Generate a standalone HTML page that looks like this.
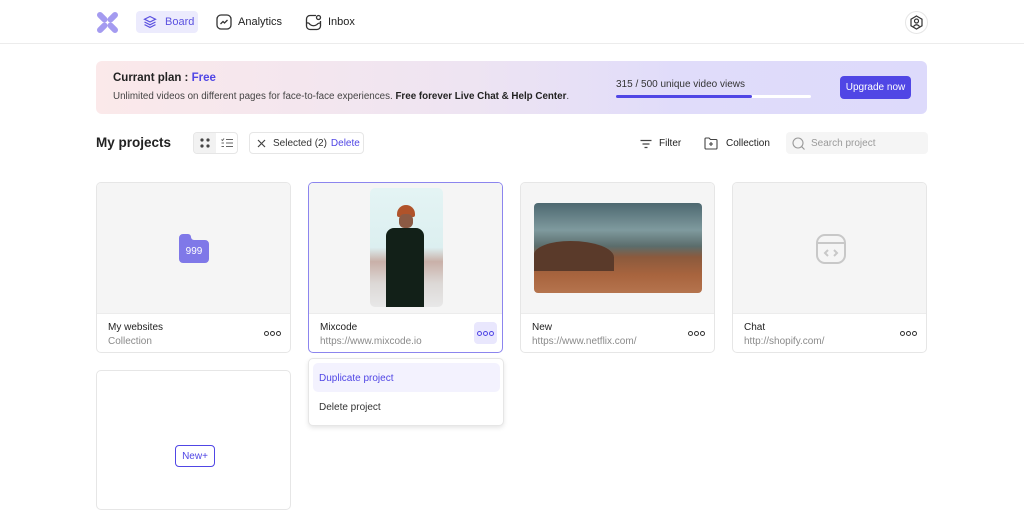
<!DOCTYPE html>
<html><head><meta charset="utf-8"><style>
*{box-sizing:border-box;margin:0;padding:0}
body{width:1024px;height:501px;overflow:hidden;background:#fff;font-family:"Liberation Sans",sans-serif;color:#222;position:relative}
.abs{position:absolute}
.nav{position:absolute;left:0;top:0;width:1024px;height:44px;border-bottom:1px solid #ececec}
.ni{position:absolute;top:11px;height:22px;display:flex;align-items:center;font-size:11px;color:#222}
.card{position:absolute;width:195px;height:171px;border:1px solid #e6e6e6;border-radius:5px;overflow:hidden;background:#fff}
.card .img{height:131px;background:#f5f5f5;border-bottom:1px solid #ececec;position:relative}
.card .t{position:absolute;left:11px;top:139px;font-size:10px;color:#222}
.card .s{position:absolute;left:11px;top:153px;font-size:10px;color:#8a8a8a}
.dots{position:absolute;right:9px;top:145px;width:18px;height:10px;display:flex;gap:1px;justify-content:center;align-items:center}
.dots i{width:5px;height:5px;border:1.4px solid #333;border-radius:50%}
</style></head><body>
<div class="nav">
 <svg class="abs" style="left:96px;top:11px" width="23" height="23" viewBox="0 0 23 23"><g stroke="#a49bf0" stroke-width="6" stroke-linecap="round"><path d="M4 4 L8.5 8.5"/><path d="M19 4 L14.5 8.5"/><path d="M4 19 L8.5 14.5"/><path d="M19 19 L14.5 14.5"/></g></svg>
 <div class="ni" style="left:136px;width:62px;background:#ecebfd;border-radius:4px;color:#5b51e0;padding-left:7px">
  <svg width="14" height="14" viewBox="0 0 14 14" fill="none" stroke="#5b51e0" stroke-width="1.2"><path d="M7 1.5 L12.5 4.2 L7 7 L1.5 4.2Z"/><path d="M1.5 7 L7 9.8 L12.5 7"/><path d="M1.5 9.6 L7 12.4 L12.5 9.6"/></svg><span style="margin-left:8px">Board</span></div>
 <div class="ni" style="left:216px">
  <svg width="16" height="16" viewBox="0 0 16 16" fill="none" stroke="#333" stroke-width="1.3"><rect x="1" y="1" width="14" height="14" rx="4"/><path d="M4.5 10 L7 7.5 L8.5 9 L11.5 6"/></svg><span style="margin-left:6px">Analytics</span></div>
 <div class="ni" style="left:305px">
  <svg width="17" height="17" viewBox="0 0 17 17" fill="none" stroke="#333" stroke-width="1.3"><path d="M11 1.5 H5 A3.5 3.5 0 0 0 1.5 5 V12 A3.5 3.5 0 0 0 5 15.5 H12 A3.5 3.5 0 0 0 15.5 12 V7"/><path d="M1.5 9 Q4 8.5 5 10.5 Q8.5 13 12 10.5 Q13 9 15.5 9"/><circle cx="13.5" cy="3.5" r="2"/></svg><span style="margin-left:6px">Inbox</span></div>
 <div class="abs" style="left:905px;top:11px;width:23px;height:23px;border:1px solid #e6e6e6;border-radius:50%;display:flex;align-items:center;justify-content:center">
  <svg width="15" height="15" viewBox="0 0 15 15" fill="none" stroke="#333" stroke-width="1.2"><path d="M7.5 1 L13 4.2 V10.8 L7.5 14 L2 10.8 V4.2Z"/><circle cx="7.5" cy="6" r="2"/><path d="M4.5 11.5 Q7.5 8 10.5 11.5"/></svg></div>
</div>

<div class="abs" style="left:96px;top:61px;width:831px;height:53px;border-radius:6px;background:linear-gradient(90deg,#fbe9ea 0%,#eee4f2 45%,#e0dcfa 70%,#dddafb 100%)">
 <div class="abs" style="left:17px;top:11px;font-size:11.5px;font-weight:bold;color:#222">Currant plan : <span style="color:#5046e5">Free</span></div>
 <div class="abs" style="left:17px;top:30px;font-size:9.8px;color:#444;white-space:nowrap">Unlimited videos on different pages for face-to-face experiences. <b style="color:#222">Free forever Live Chat &amp; Help Center</b>.</div>
 <div class="abs" style="left:520px;top:18px;font-size:10px;color:#333">315 / 500 unique video views</div>
 <div class="abs" style="left:520px;top:34px;width:195px;height:3px;background:#fff;border-radius:2px"><div style="width:136px;height:3px;background:#5046e5;border-radius:2px"></div></div>
 <div class="abs" style="left:744px;top:15px;width:71px;height:23px;background:#5046e5;border-radius:4px;color:#fff;font-size:10px;display:flex;align-items:center;justify-content:center">Upgrade now</div>
</div>

<div class="abs" style="left:96px;top:135px;font-size:13.5px;font-weight:bold;color:#222">My projects</div>
<div class="abs" style="left:193px;top:132px;width:45px;height:22px;border:1px solid #e6e6e6;border-radius:4px;overflow:hidden;display:flex">
 <div style="width:22px;height:20px;background:#f2f2f2;position:relative"><svg class="abs" style="left:6px;top:5px" width="10" height="10" viewBox="0 0 10 10" fill="#444"><circle cx="2" cy="2" r="1.6"/><circle cx="8" cy="2" r="1.6"/><circle cx="2" cy="8" r="1.6"/><circle cx="8" cy="8" r="1.6"/></svg></div>
 <div style="width:22px;height:20px;position:relative"><svg class="abs" style="left:5px;top:5px" width="12" height="10" viewBox="0 0 12 10" fill="none" stroke="#666" stroke-width="1"><path d="M0.5 1.5 L1.5 2.5 L3 0.5M5 1.5H12M0.5 5H3M5 5H12M0.5 8.5H3M5 8.5H12"/></svg></div>
</div>
<div class="abs" style="left:249px;top:132px;width:115px;height:22px;border:1px solid #e6e6e6;border-radius:4px;font-size:10px;display:flex;align-items:center;padding-left:7px">
 <svg width="9" height="9" viewBox="0 0 9 9" stroke="#444" stroke-width="1.2"><path d="M1 1L8 8M8 1L1 8"/></svg><span style="margin-left:7px;color:#333">Selected (2)</span><span style="margin-left:4px;color:#5046e5">Delete</span></div>

<div class="abs" style="left:640px;top:138px;display:flex;align-items:center;font-size:10px;color:#222">
 <svg width="12" height="10" viewBox="0 0 12 10" stroke="#444" stroke-width="1.2"><path d="M0.5 1.5H11.5M2.5 5H9.5M4.5 8.5H7.5"/></svg><span style="margin-left:7px">Filter</span></div>
<div class="abs" style="left:704px;top:137px;display:flex;align-items:center;font-size:10px;color:#222">
 <svg width="14" height="13" viewBox="0 0 14 13" fill="none" stroke="#444" stroke-width="1.1"><path d="M1 2 A1 1 0 0 1 2 1 H5 L6.5 2.5 H12 A1 1 0 0 1 13 3.5 V11 A1 1 0 0 1 12 12 H2 A1 1 0 0 1 1 11Z"/><path d="M7 5V9M5 7H9"/></svg><span style="margin-left:8px">Collection</span></div>
<div class="abs" style="left:786px;top:132px;width:142px;height:22px;background:#f5f5f5;border-radius:4px;display:flex;align-items:center;padding-left:6px;font-size:10px;color:#9a9a9a">
 <svg width="13" height="13" viewBox="0 0 13 13" fill="none" stroke="#999" stroke-width="1.1"><circle cx="6" cy="6" r="5"/><path d="M9.7 9.7L12.5 12.5"/></svg><span style="margin-left:6px">Search project</span></div>

<div class="card" style="left:96px;top:182px">
 <div class="img"><div class="abs" style="left:82px;top:51px;width:30px;height:29px">
  <svg width="30" height="29" viewBox="0 0 30 29"><path d="M0 4 A4 4 0 0 1 4 0 H9 A3 3 0 0 1 12 3 V3 A3 3 0 0 0 15 6 H26 A4 4 0 0 1 30 10 V25 A4 4 0 0 1 26 29 H4 A4 4 0 0 1 0 25Z" fill="#7f78e8"/></svg>
  <div class="abs" style="left:0;top:12px;width:30px;text-align:center;color:#fff;font-size:10px">999</div></div></div>
 <div class="t">My websites</div><div class="s">Collection</div>
 <div class="dots"><i></i><i></i><i></i></div>
</div>

<div class="card" style="left:308px;top:182px;border-color:#8c85ee">
 <div class="img"><div class="abs" style="left:61px;top:5px;width:73px;height:119px;border-radius:5px;overflow:hidden;background:linear-gradient(180deg,#e4f4f4 0%,#dceff0 50%,#c9b0a8 62%,#dcd8d6 80%,#e8e8e8 100%)">
  <div class="abs" style="left:27px;top:17px;width:18px;height:12px;background:#b0532a;border-radius:9px 9px 2px 2px"></div>
  <div class="abs" style="left:29px;top:26px;width:14px;height:14px;background:#8b5a44;border-radius:40%"></div>
  <div class="abs" style="left:16px;top:40px;width:38px;height:79px;background:#122018;border-radius:8px 8px 0 0"></div>
 </div></div>
 <div class="t">Mixcode</div><div class="s">https://www.mixcode.io</div>
 <div class="abs" style="right:5px;top:139px;width:23px;height:22px;background:#e9e7fd;border-radius:4px;display:flex;align-items:center;justify-content:center;gap:1px"><i style="width:5px;height:5px;border:1.4px solid #5046e5;border-radius:50%"></i><i style="width:5px;height:5px;border:1.4px solid #5046e5;border-radius:50%"></i><i style="width:5px;height:5px;border:1.4px solid #5046e5;border-radius:50%"></i></div>
</div>

<div class="card" style="left:520px;top:182px">
 <div class="img"><div class="abs" style="left:13px;top:20px;width:168px;height:90px;border-radius:4px;overflow:hidden;background:linear-gradient(180deg,#4d6870 0%,#7f9a9e 30%,#5b6d6c 48%,#8b5a3d 60%,#a8643e 80%,#b5744e 100%)">
  <div class="abs" style="left:0;top:38px;width:80px;height:30px;background:#5a3a2a;border-radius:50% 60% 0 0"></div>
 </div></div>
 <div class="t">New</div><div class="s">https://www.netflix.com/</div>
 <div class="dots"><i></i><i></i><i></i></div>
</div>

<div class="card" style="left:732px;top:182px">
 <div class="img"><svg class="abs" style="left:82px;top:50px" width="32" height="32" viewBox="0 0 32 32" fill="none" stroke="#c8c8c8" stroke-width="2"><rect x="2" y="2" width="28" height="28" rx="8"/><path d="M2 10H30"/><path d="M13 17L10 20L13 23M19 17L22 20L19 23"/></svg></div>
 <div class="t">Chat</div><div class="s">http://shopify.com/</div>
 <div class="dots"><i></i><i></i><i></i></div>
</div>

<div class="card" style="left:96px;top:370px;height:140px">
 <div class="abs" style="left:78px;top:74px;width:40px;height:22px;border:1px solid #5046e5;border-radius:4px;color:#5046e5;font-size:10px;display:flex;align-items:center;justify-content:center">New+</div>
</div>

<div class="abs" style="left:308px;top:358px;width:196px;height:68px;background:#fff;border:1px solid #e6e6e6;border-radius:5px;box-shadow:0 2px 5px rgba(0,0,0,.1)">
 <div class="abs" style="left:4px;top:4px;width:187px;height:29px;background:#f3f2fe;border-radius:5px;font-size:10px;color:#5046e5;padding:10px 0 0 6px">Duplicate project</div>
 <div class="abs" style="left:10px;top:43px;font-size:10px;color:#333">Delete project</div>
</div>
</body></html>
